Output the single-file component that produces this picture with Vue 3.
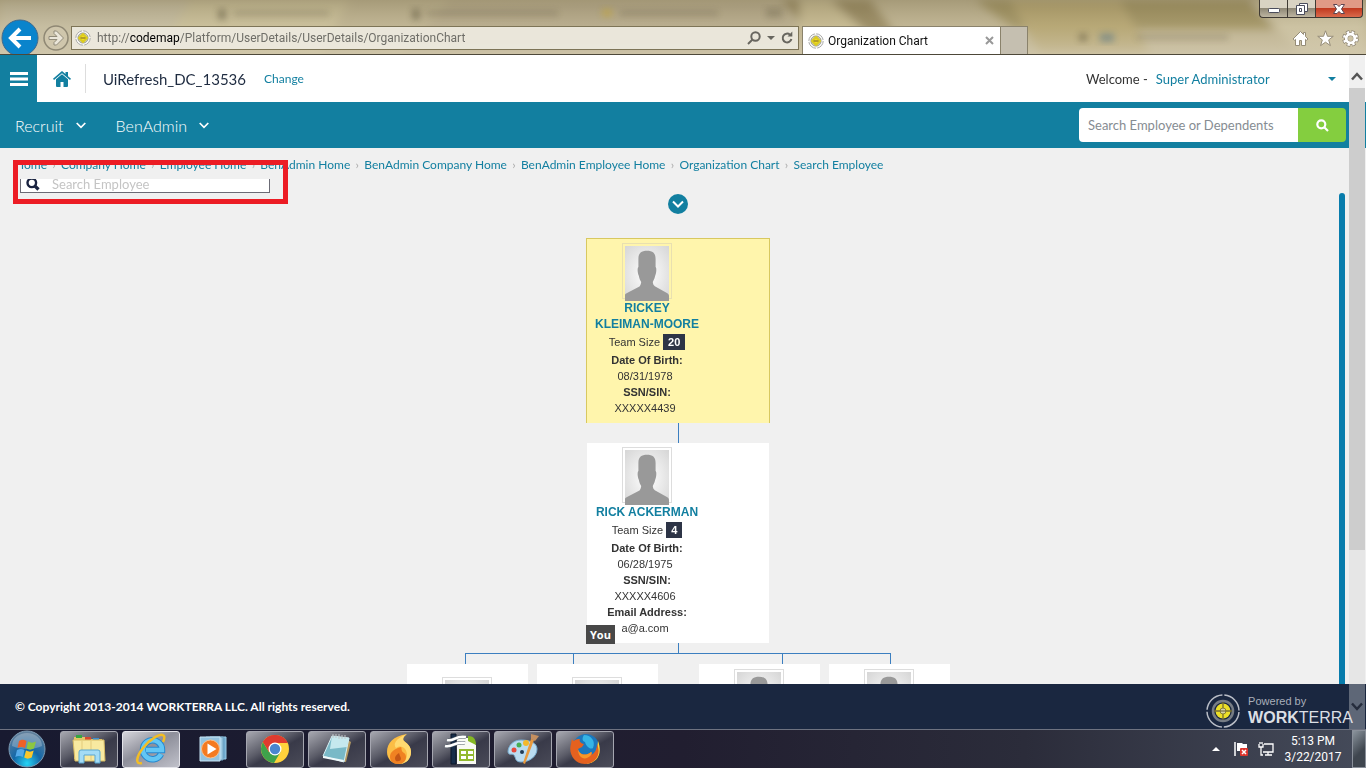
<script setup>
import { ref } from 'vue'

const menus = ['Recruit', 'BenAdmin']

const crumbs = [
  'Home',
  'Company Home',
  'Employee Home',
  'BenAdmin Home',
  'BenAdmin Company Home',
  'BenAdmin Employee Home',
  'Organization Chart',
  'Search Employee'
]

const people = [
  {
    id: 1,
    name: 'RICKEY\nKLEIMAN-MOORE',
    team: 20,
    manager: true,
    fields: [
      ['Date Of Birth:', '08/31/1978'],
      ['SSN/SIN:', 'XXXXX4439']
    ]
  },
  {
    id: 2,
    name: 'RICK ACKERMAN',
    team: 4,
    you: true,
    fields: [
      ['Date Of Birth:', '06/28/1975'],
      ['SSN/SIN:', 'XXXXX4606'],
      ['Email Address:', 'a@a.com']
    ]
  }
]

// direct reports, two per pair
const reports = [
  { id: 'left', low: true, members: [1, 2] },
  { id: 'right', low: false, members: [3, 4] }
]

const employee = ref('')
const search = ref('')
</script>

<template>
  <div class="desktop">
    <svg class="defs" width="0" height="0" aria-hidden="true">
      <defs>
        <radialGradient id="photo-bg" cx=".5" cy=".5" r=".7">
          <stop offset="0" stop-color="#fff" />
          <stop offset="1" stop-color="#d6d6d6" />
        </radialGradient>
        <symbol id="person" viewBox="0 0 44 55">
          <rect width="44" height="55" fill="url(#photo-bg)" />
          <path fill="#999" d="M22 4.700c5.500 0 8.600 2.300 8.600 8V21c1.200.5.900 6-.5 9-.6 3-1.600 4.500-2.300 6 .2 2 .6 3 2 4.200L41 46.500c2 1 3 2 3 3.500v5H0v-6c0-1 1-1.500 3-2.500l11.500-6c1-1.500 1.500-2.500 1.700-4.500-1-1.500-1.800-3-2.300-6-1.400-3-1.700-8.500-.5-9v-8.300c0-5.700 3.100-8 8.600-8z" />
        </symbol>
        <symbol id="favicon" viewBox="0 0 16 16">
          <circle cx="8" cy="8" r="7.200" fill="#f7f7f4" stroke="#a9a9a9" stroke-dasharray="10 1.300" />
          <circle cx="8" cy="8" r="5" fill="#d7d6b8" stroke="#99998f" />
          <path d="M8 4l4 4-4 4-4-4z" fill="#f4df22" stroke="#dccc20" stroke-width="2" stroke-linejoin="round" />
          <path d="M5.500 8h5" stroke="#88752b" stroke-width="1.200" />
        </symbol>
      </defs>
    </svg>

    <header class="chrome">
      <svg class="glass" viewBox="0 0 1366 55" preserveAspectRatio="none" aria-hidden="true">
        <defs>
          <linearGradient id="sheen" x1="0" x2="0" y1="0" y2="1">
            <stop offset="0" stop-color="#8d8260" stop-opacity=".5" />
            <stop offset=".5" stop-color="#c4ba9a" stop-opacity=".4" />
            <stop offset="1" stop-color="#d3cab0" stop-opacity=".75" />
          </linearGradient>
          <filter id="soft"><feGaussianBlur stdDeviation="5" /></filter>
          <filter id="ghost"><feGaussianBlur stdDeviation="3" /></filter>
        </defs>
        <rect width="1366" height="55" fill="#bfb391" />
        <g filter="url(#soft)">
          <path d="M0 0h190l-20 55H0z" fill="#c8c0a6" />
          <path d="M190 0h160l-30 55H160z" fill="#cfc49c" />
          <path d="M450 0h330l30 55H400z" fill="#b3a688" />
          <path d="M780 0h90l40 55h-80z" fill="#857448" />
          <path d="M800 0h30l60 55h-90z" fill="#c9bb8f" />
          <path d="M975 0h300l40 30h-300z" fill="#93834c" />
          <path d="M1010 0h110l30 55h-110z" fill="#b09d60" />
          <path d="M1250 0h116v55h-66z" fill="#d2c8a8" />
        </g>
        <rect width="1366" height="55" fill="url(#sheen)" />
        <g filter="url(#ghost)" fill="#574f38" opacity=".45">
          <rect x="218" y="9" width="8" height="11" />
          <rect x="234" y="11" width="95" height="5" opacity=".55" />
          <rect x="412" y="9" width="8" height="11" />
          <rect x="426" y="11" width="132" height="5" opacity=".55" />
          <rect x="602" y="9" width="10" height="8" fill="#c8a629" />
          <rect x="620" y="11" width="98" height="5" opacity=".55" />
          <rect x="766" y="8" width="16" height="10" opacity=".6" />
          <rect x="1079" y="34" width="8" height="8" />
          <rect x="1100" y="34" width="14" height="9" fill="#4b7087" />
          <rect x="1136" y="36" width="92" height="4" opacity=".65" />
        </g>
      </svg>

      <div class="caption">
        <button class="win-btn" aria-label="Minimize">
          <svg width="14" height="12" viewBox="0 0 14 12"><rect x="1.500" y="5.500" width="11" height="4" rx="1" fill="#fff" stroke="#4b4d5c" /></svg>
        </button>
        <button class="win-btn" aria-label="Restore">
          <svg width="14" height="14" viewBox="0 0 14 14" fill="#fff" stroke="#4b4d5c">
            <path d="M4.500 1.500h8v8h-8z" />
            <path d="M1.500 3.500h8v9h-8zM4.500 6.500h2v3h-2z" fill-rule="evenodd" />
          </svg>
        </button>
        <button class="win-btn win-close" aria-label="Close window">
          <svg width="14" height="12" viewBox="0 0 14 12"><path d="M1.500 1.500h3.500L7 3.600l2-2.100h3.500L9.500 6l3 4.500H9L7 8.400l-2 2.100H1.500l3-4.500z" fill="#fff" stroke="#5d4450" /></svg>
        </button>
      </div>

      <div class="browser-row">
        <div class="travel">
          <button class="back" aria-label="Back">
            <svg width="38" height="38" viewBox="0 0 38 38">
              <circle cx="19" cy="19" r="18" fill="#0a84cc" stroke="#41688a" />
              <path d="M30 19H11M19 10l-9 9 9 9" fill="none" stroke="#fff" stroke-width="4" />
            </svg>
          </button>
          <button class="forward" aria-label="Forward">
            <svg width="26" height="26" viewBox="0 0 26 26">
              <circle cx="13" cy="13" r="12" fill="#cfc6ac" stroke="#8f8874" stroke-width="1.500" />
              <path d="M6 11.500h8L11 8.500V6h2.500l7 7-7 7H11v-2.500l3-3H6z" fill="#ebe6d9" stroke="#918b7a" />
            </svg>
          </button>
        </div>
        <div class="address">
          <svg width="16" height="16"><use href="#favicon" /></svg>
          <div class="url" role="textbox" aria-label="Address" contenteditable="true" spellcheck="false">http://<b>codemap</b>/Platform/UserDetails/UserDetails/OrganizationChart</div>
          <button class="plain" aria-label="Search the web">
            <svg width="14" height="14" viewBox="0 0 14 14" fill="none" stroke="#68665f" stroke-width="2"><circle cx="8.500" cy="5.500" r="4.200" /><path d="M5.500 8.500L1 13" /></svg>
          </button>
          <button class="plain" aria-label="Show address list">
            <svg width="8" height="4" viewBox="0 0 8 4"><path d="M0 0h8L4 4z" fill="#68665f" /></svg>
          </button>
          <button class="plain" aria-label="Refresh">
            <svg width="12" height="14" viewBox="0 0 12 14"><path d="M9 3.700A4.400 4.400 0 1 0 10.400 8" fill="none" stroke="#68665f" stroke-width="2" /><path d="M6.500 5.500h4.800V.5z" fill="#68665f" /></svg>
          </button>
        </div>
        <div class="tab">
          <svg width="16" height="16"><use href="#favicon" /></svg>
          <span>Organization Chart</span>
          <button class="plain" aria-label="Close tab">
            <svg width="9" height="9" viewBox="0 0 9 9"><path d="M1 1l7 7M8 1L1 8" stroke="#999" stroke-width="2" /></svg>
          </button>
        </div>
        <button class="new-tab" aria-label="New tab"></button>
        <div class="browser-tools">
          <button class="plain" aria-label="Home page">
            <svg width="17" height="17" viewBox="0 0 17 17"><path d="M8.500 1.500L1 9l1.500 1.300 1-.9v6.100h4v-5h2v5h4V9.400l1 .9L16 9l-2.500-2.500v-4h-2v2z" fill="#fff" stroke="#958c77" /></svg>
          </button>
          <button class="plain" aria-label="Favorites">
            <svg width="17" height="17" viewBox="0 0 17 17"><path d="M8.500.8l2 5.500h5.800l-4.600 3.600 1.700 5.700-4.900-3.400-4.900 3.400 1.700-5.700L.7 6.300h5.800z" fill="#fff" stroke="#958c77" /></svg>
          </button>
          <button class="plain" aria-label="Tools">
            <svg width="17" height="17" viewBox="0 0 17 17" fill="none">
              <circle cx="8.500" cy="8.500" r="6.300" stroke="#8b8270" stroke-width="4" stroke-dasharray="3.200 1.750" />
              <circle cx="8.500" cy="8.500" r="4.500" stroke="#8b8270" stroke-width="4" />
              <circle cx="8.500" cy="8.500" r="6.300" stroke="#fff" stroke-width="2.500" stroke-dasharray="2.400 2.550" stroke-dashoffset="-.4" />
              <circle cx="8.500" cy="8.500" r="4.300" stroke="#fff" stroke-width="2.800" />
            </svg>
          </button>
        </div>
      </div>
    </header>

    <div class="page">
      <div class="topbar">
        <button class="burger" aria-label="Menu">
          <svg width="18" height="14" viewBox="0 0 18 14" fill="#fff"><path d="M0 0h18v3H0zM0 5.500h18v3H0zM0 11h18v3H0z" /></svg>
        </button>
        <a href="#" class="home" aria-label="Home">
          <svg width="18" height="16" viewBox="0 0 18 16" fill="#127fa0"><path d="M9 3.300l6 5V15a1 1 0 0 1-1 1h-3.500v-5h-3v5H4a1 1 0 0 1-1-1V8.300z" /><path d="M9 0l3.500 3V1h2.500v4.200l3 2.500-1 1.200L9 2.200 1 8.900 0 7.700z" /></svg>
        </a>
        <span class="company">UiRefresh_DC_13536</span>
        <a href="#" class="change">Change</a>
        <div class="account">
          <span>Welcome -</span>
          <a href="#">Super Administrator</a>
          <button class="plain caret" aria-label="Account menu">
            <svg width="8" height="4" viewBox="0 0 8 4"><path d="M0 0h8L4 4z" fill="#127fa0" /></svg>
          </button>
        </div>
      </div>

      <nav class="navbar">
        <button v-for="menu in menus" :key="menu" class="menu">
          {{ menu }}
          <svg width="10" height="7" viewBox="0 0 10 7" fill="none" stroke="#fff" stroke-width="1.700"><path d="M.7 1L5 5.300 9.300 1" /></svg>
        </button>
        <form class="search" @submit.prevent>
          <input v-model="search" type="text" placeholder="Search Employee or Dependents" aria-label="Search Employee or Dependents">
          <button aria-label="Search">
            <svg width="13" height="13" viewBox="0 0 13 13" fill="none" stroke="#fff" stroke-width="2.200"><circle cx="5.300" cy="5.300" r="4" /><path d="M8 8l4 4" /></svg>
          </button>
        </form>
      </nav>

      <main class="content">
        <div class="crumbs">
          <a v-for="crumb in crumbs" :key="crumb" href="#" class="crumb">{{ crumb }}</a>
        </div>

        <div class="employee-search">
          <label class="employee-box">
            <svg width="14" height="14" viewBox="0 0 14 14" fill="none" stroke="#1a2340"><circle cx="5.800" cy="5.800" r="4.300" stroke-width="2.400" /><path d="M8.800 8.800l3.700 3.700" stroke-width="3.200" /></svg>
            <input v-model="employee" type="text" placeholder="Search Employee" aria-label="Search Employee">
          </label>
        </div>
        <div class="marker"></div>

        <div class="tree">
          <button class="expand" aria-label="Show managers">
            <svg width="12" height="8" viewBox="0 0 12 8" fill="none" stroke="#fff" stroke-width="2"><path d="M1 1.500l5 5 5-5" /></svg>
          </button>

          <template v-for="person in people" :key="person.id">
            <article class="card" :class="{ manager: person.manager }">
              <div class="details">
                <div class="photo"><svg width="44" height="55"><use href="#person" /></svg></div>
                <a href="#" class="name">{{ person.name }}</a>
                <div class="team">Team Size <span class="count">{{ person.team }}</span></div>
                <template v-for="[label, value] in person.fields" :key="label">
                  <div class="label">{{ label }}</div>
                  <div class="value">{{ value }}</div>
                </template>
              </div>
              <span v-if="person.you" class="you">You</span>
            </article>
            <div class="link" :class="{ short: person.you }"></div>
          </template>

          <div class="branches"><i></i><i></i></div>
          <div class="reports">
            <div v-for="pair in reports" :key="pair.id" class="pair">
              <article v-for="n in pair.members" :key="n" class="report" :class="{ low: pair.low }">
                <div class="photo"><svg width="44" height="55"><use href="#person" /></svg></div>
              </article>
            </div>
          </div>
        </div>
        <div class="chart-scroll"></div>
      </main>

      <footer class="footer">
        <span>© Copyright 2013-2014 WORKTERRA LLC. All rights reserved.</span>
        <div class="brand">
          <svg width="34" height="34" viewBox="0 0 34 34" fill="none">
            <circle cx="17" cy="17" r="16" stroke="#b9bdc6" stroke-width="1.500" stroke-dasharray="23.100 2" stroke-dashoffset="-1" />
            <circle cx="17" cy="17" r="10" stroke="#777d85" stroke-width="2.500" />
            <circle cx="17" cy="17" r="7.500" fill="#ecdf28" />
            <path d="M17 8v18M8 17h18" stroke="#776f32" stroke-width="1.300" />
            <circle cx="17" cy="17" r="3" fill="#d7d3a4" stroke="#8a8130" />
            <path d="M14 17h6" stroke="#635b2c" />
          </svg>
          <div>
            <div class="powered">Powered by</div>
            <div class="wordmark"><b>WORK</b>TERRA</div>
          </div>
        </div>
      </footer>

      <div class="scrollbar">
        <div class="scroll-up">
          <svg width="12" height="9" viewBox="0 0 12 9"><path d="M1 7.500l5-5.500 5 5.500" fill="none" stroke="#555" stroke-width="2.500" /></svg>
        </div>
        <div class="thumb"></div>
        <div class="track"></div>
        <div class="scroll-down">
          <svg width="12" height="9" viewBox="0 0 12 9"><path d="M1 1.500L6 7l5-5.500" fill="none" stroke="#252c3c" stroke-width="2.500" /></svg>
        </div>
      </div>
    </div>

    <div class="taskbar">
      <button class="start" aria-label="Start">
        <svg width="38" height="38" viewBox="0 0 38 38">
          <defs>
            <radialGradient id="orb" cx=".5" cy=".9" r=".85">
              <stop offset="0" stop-color="#25d4f5" />
              <stop offset=".45" stop-color="#1468a8" />
              <stop offset="1" stop-color="#5f7f9c" />
            </radialGradient>
          </defs>
          <circle cx="19" cy="19" r="18" fill="url(#orb)" stroke="#7d9bb3" />
          <path d="M4 16a15 13 0 0 1 30 0c-8 4-22 4-30 0z" fill="#fff" opacity=".25" />
          <path d="M11 11c3-2 5-1.500 7.500 0L17 18c-2.500-1.500-5-1.500-7.500 0z" fill="#ee6028" />
          <path d="M20 11.500c3 1.500 5 1.500 8 0l-2 7c-3 1.500-5 1.500-7.500 0z" fill="#8cc641" />
          <path d="M9 20c3-1.500 5-1.500 7.500 0l-1.700 7c-2.500-1.500-5-1.500-7.500 0z" fill="#54a9e8" />
          <path d="M18 20.500c3 1.500 5 1.500 7.700 0l-2 7c-3 1.500-5 1.500-7.500 0z" fill="#fbc72c" />
        </svg>
      </button>
      <button class="task" aria-label="Windows Explorer">
        <svg width="34" height="32" viewBox="0 0 34 32">
          <path d="M2 4h11l2 2h15v20H2z" fill="#e3c567" />
          <path d="M4 2h6v3H4z" fill="#35a641" /><path d="M13 4h6v3h-6z" fill="#d8482f" /><path d="M21 5h6v3h-6z" fill="#3b8ed0" />
          <path d="M1 7h31l1 21H3z" fill="#f8e9a0" stroke="#d6ba63" />
          <path d="M10 8v19M19 8v19" stroke="#e3cb7d" />
          <path d="M7 30V19q0-2 2-2h17q2 0 2 2v11h-5v-8H12v8z" fill="#a4dcf5" stroke="#5aa7d1" />
        </svg>
      </button>
      <button class="task active" aria-label="Internet Explorer">
        <svg width="34" height="34" viewBox="0 0 34 34" fill="none">
          <path d="M27 22a9.500 9.500 0 1 1 1-4H12" stroke="#2689d0" stroke-width="6.500" />
          <path d="M27 22a9.500 9.500 0 1 1 1-4H12" stroke="#63c6f4" stroke-width="4.500" />
          <path d="M8 31C1 33 2 25 9 16S27 0 30 4c1 2 0 4-1 6" stroke="#f2bd25" stroke-width="2.500" />
        </svg>
      </button>
      <button class="task bare" aria-label="Media Player">
        <svg width="30" height="28" viewBox="0 0 30 28">
          <path d="M12 2h16v22H12z" fill="#6fa9cd" stroke="#9acbe6" /><path d="M8 2h17v23H8z" fill="#a0cbe3" stroke="#6fa2c1" /><path d="M2 2h20v24H2z" fill="#94c3df" stroke="#c9e5f4" />
          <circle cx="12.500" cy="14" r="9" fill="#f47a20" stroke="#fac08c" /><path d="M9.500 8.500l9 5.500-9 5.500z" fill="#fff" />
        </svg>
      </button>
      <button class="task" aria-label="Chrome">
        <svg width="30" height="30" viewBox="0 0 30 30">
          <circle cx="15" cy="15" r="14" fill="#ffd23c" />
          <path d="M15 15L2.900 8A14 14 0 0 1 27.100 8H15z" fill="#df3b2f" />
          <path d="M2.900 8A14 14 0 0 0 14 29l6.500-11H9z" fill="#3fa24b" />
          <path d="M2.900 8A14 14 0 0 1 27.700 9H15l-6 9z" fill="#df3b2f" />
          <circle cx="15" cy="15" r="6.500" fill="#fff" /><circle cx="15" cy="15" r="5.200" fill="#4a86cf" />
        </svg>
      </button>
      <button class="task" aria-label="Notepad">
        <svg width="32" height="32" viewBox="0 0 32 32">
          <path d="M25 6l5 3-5 20-4-1z" fill="#b59a62" />
          <path d="M11 3l17 2-5 24L2 23z" fill="#79b9c7" stroke="#d8eff3" />
          <path d="M11 3l17 2-2 9-17 2z" fill="#c5e8ee" />
          <path d="M2 23l21 4-1 2-20-4z" fill="#eef8fa" />
          <path d="M12 1v4M15 1v4M18 1v5M21 2v4M24 2v4" stroke="#c1c6c8" />
        </svg>
      </button>
      <button class="task" aria-label="Burn">
        <svg width="28" height="32" viewBox="0 0 28 32">
          <path d="M22 1C8 3 2 10 2 19c0 7 5 12 12 12s12-5 12-12c0-5-3-8-7-11-2-2 0-5 3-7z" fill="#fbbd45" />
          <path d="M22 1C10 6 8 11 11 15c6-4 11 1 11 7 0 4-3 9-8 9 7 0 12-5 12-12 0-5-3-8-7-11-2-2 0-5 3-7z" fill="#ffda70" />
          <path d="M16 14C9 16 5 19 5 24c0 4 3 7 8 7s8-3 8-7-3-4-4-6 0-3-1-4z" fill="#f08222" />
          <path d="M14 20c-4 3-5 5-3 8 5 1 6-2 4-5z" fill="#c55716" />
        </svg>
      </button>
      <button class="task" aria-label="OpenOffice Calc">
        <svg width="34" height="32" viewBox="0 0 34 32">
          <path d="M7 1h5v30H7z" fill="#172d49" stroke="#0c1729" />
          <path d="M13 5h12l7 7v19H13z" fill="#f8faf2" /><path d="M24 3c7 0 8 5 8 9l-8-4z" fill="#85b822" />
          <path d="M15 16h15v12H15z" fill="#92b92e" />
          <path d="M17 18h5v3h-5zM24 18h5v3h-5zM17 23h5v3h-5zM24 23h5v3h-5z" fill="#fff" />
          <path d="M3 7c7 2 8-5 19-3M1 13c8 2 9-5 20-3" fill="none" stroke="#56606b" stroke-width="3.500" />
          <path d="M3 7c7 2 8-5 19-3M1 13c8 2 9-5 20-3" fill="none" stroke="#fff" stroke-width="2.500" />
        </svg>
      </button>
      <button class="task" aria-label="Paint">
        <svg width="34" height="32" viewBox="0 0 34 32">
          <path d="M15 7C7 7 2 13 2 19c1 4 4 1 6 3 2 3 1 7 7 7 9 0 16-6 16-13 0-6-7-9-16-9z" fill="#badcf1" stroke="#7aaed1" />
          <circle cx="8" cy="17" r="2.500" fill="#e44a3d" /><circle cx="13" cy="12" r="2.500" fill="#46ae55" /><circle cx="20" cy="10" r="3" fill="#f4b82c" /><circle cx="16" cy="19" r="2" fill="#203a55" />
          <path d="M28 7l-9 24-2-1 8-24z" fill="#e99a3e" /><path d="M25 1l8 2-4 5-4-2z" fill="#c58f60" />
        </svg>
      </button>
      <button class="task" aria-label="Firefox">
        <svg width="32" height="32" viewBox="0 0 32 32">
          <circle cx="17" cy="14" r="13" fill="#1c77bd" />
          <path d="M15 2c7 0 12 6 9 13-3 2-7-2-8-6-3-1-3-4-1-7z" fill="#36b4e5" />
          <path d="M29 8c5 13-1 22-12 23 7-4 11-10 12-23z" fill="#ffd43b" />
          <path d="M3 5c0 2 1 3 2 3 2-2 4-2 6-2-1 2 0 4 4 5l-2 3-4 2c1 5 7 8 13 3 1 0 1 2 0 3 4-2 6-6 6-11 5 11-2 20-12 20C5 31-1 20 2 11z" fill="#e4611f" />
          <path d="M9 16c1 5 7 8 13 3 1 0 1 2 0 3-5 6-13 4-13-6z" fill="#f79728" />
        </svg>
      </button>

      <div class="tray">
        <button class="plain" aria-label="Show hidden icons"><svg width="8" height="4" viewBox="0 0 8 4"><path d="M0 4h8L4 0z" fill="#fff" /></svg></button>
        <svg width="16" height="16" viewBox="0 0 16 16"><path d="M2 1v14" stroke="#fff" stroke-width="1.500" /><path d="M4 2h5l1 1h4v7H4z" fill="#fff" /><rect x="7" y="7" width="8" height="8" rx="1" fill="#dc352d" /><path d="M9 9l4 4M13 9l-4 4" stroke="#fff" stroke-width="1.500" /></svg>
        <svg width="16" height="16" viewBox="0 0 16 16" fill="none" stroke="#fff" stroke-width="1.300"><path d="M6 3h9v8H5M7 14h7M10 11v3M1 3v3h4V3M2 3V1M4 3V1M3 6v8h2" /></svg>
        <div class="clock">
          <div>5:13 PM</div>
          <div>3/22/2017</div>
        </div>
        <button class="peek" aria-label="Show desktop"></button>
      </div>
    </div>
  </div>
</template>

<style>
body {
  margin: 0;
  overflow: hidden;
}
</style>

<style scoped>
.desktop {
  display: flex;
  flex-direction: column;
  height: 100vh;
  font-family: Lato, "Liberation Sans", sans-serif;
  font-size: 12px;
  color: #333;
}

.desktop * {
  box-sizing: border-box;
}

.defs {
  position: absolute;
}

svg {
  display: block;
  flex: none;
}

a {
  color: #127fa0;
  text-decoration: none;
}

button {
  display: flex;
  align-items: center;
  justify-content: center;
  padding: 0;
  border: 0;
  background: none;
  font: inherit;
  color: inherit;
}

input {
  font: inherit;
  border: 0;
  padding: 0;
  outline: 0;
  min-width: 0;
}

/* browser window */
.chrome {
  position: relative;
  flex: none;
  height: 55px;
  overflow: hidden;
  border-bottom: 1px solid #4d4839;
  font-family: Roboto, "Noto Sans", sans-serif;
}

.glass {
  position: absolute;
  width: 100%;
  height: 100%;
}

.caption {
  position: relative;
  display: flex;
  justify-content: flex-end;
  height: 26px;
  padding-right: 3px;
}

.win-btn {
  width: 28px;
  height: 18px;
  border: 1px solid #3f3a33;
  border-top: 0;
  border-right: 0;
  background: linear-gradient(#d9d3c3 45%, #8f8876 50%, #bdb5a1);
}

.win-btn:first-child {
  border-bottom-left-radius: 4px;
}

.win-close {
  width: 48px;
  border-right: 1px solid #3f3a33;
  border-bottom-right-radius: 4px;
  background: linear-gradient(#e09a86 45%, #c13a20 50%, #d9694c);
}

.browser-row {
  position: relative;
  display: flex;
  height: 28px;
}

.travel {
  display: flex;
  align-items: center;
  gap: 4px;
  width: 71px;
  height: 24px;
  padding-left: 1px;
}

.address {
  flex: 1;
  display: flex;
  align-items: center;
  gap: 6px;
  height: 24px;
  margin-right: 3px;
  padding: 0 5px 0 3px;
  border: 1px solid #7d7456;
  background: #edeadfee;
}

.url {
  flex: 1;
  color: #6f6e68;
  outline: 0;
  white-space: nowrap;
}

.url b {
  font-weight: 400;
  color: #000;
}

.tab {
  display: flex;
  align-items: center;
  gap: 4px;
  width: 199px;
  padding: 0 6px 0 5px;
  border: 1px solid #8a826b;
  border-bottom: 0;
  background: #fff;
  color: #111;
}

.tab span {
  flex: 1;
}

.new-tab {
  width: 27px;
  border: 1px solid #8a826b;
  border-width: 1px 1px 0 0;
  background: #c5bfb0;
}

.browser-tools {
  display: flex;
  justify-content: flex-end;
  align-items: center;
  gap: 8px;
  width: 338px;
  height: 24px;
  padding-right: 7px;
}

/* application */
.page {
  position: relative;
  flex: 1;
  min-height: 0;
  display: flex;
  flex-direction: column;
  background: #f0f0f0;
}

.topbar {
  display: flex;
  align-items: center;
  height: 47px;
  background: #fff;
}

.burger {
  width: 37px;
  height: 47px;
  background: #127fa0;
}

.home {
  padding: 7px 14px 6px 16px;
  border-right: 1px solid #ddd;
}

.company {
  margin: 0 18px 0 17px;
  font-size: 15px;
  color: #1e2b40;
}

.account {
  display: flex;
  align-items: center;
  gap: 8px;
  width: 280px;
  margin-left: auto;
  padding-right: 30px;
  font-size: 13px;
}

.caret {
  margin-left: auto;
}

.navbar {
  display: flex;
  align-items: center;
  gap: 30px;
  height: 46px;
  padding: 0 20px 0 15px;
  background: #127fa0;
}

.menu {
  gap: 12px;
  color: #fff;
  font-size: 16px;
  font-weight: 300;
}

.search {
  display: flex;
  width: 267px;
  height: 34px;
  margin-left: auto;
  border-radius: 4px;
  overflow: hidden;
  font-size: 13px;
}

.search input {
  flex: 1;
  padding: 0 9px;
  background: #fff;
}

.search input::placeholder {
  color: #868c92;
}

.search button {
  width: 48px;
  background: #84ce3f;
}

.content {
  position: relative;
  flex: 1;
  min-height: 0;
  overflow: hidden;
}

.crumbs {
  display: flex;
  height: 31px;
  padding: 9px 15px 0;
  line-height: 16px;
  white-space: nowrap;
}

.crumb + .crumb::before {
  content: "›";
  display: inline-block;
  width: 14px;
  text-align: center;
  color: #aaa;
}

/* the content pane cuts off the upper part of this field */
.employee-search {
  display: flex;
  align-items: flex-end;
  width: 250px;
  height: 14px;
  margin-left: 20px;
  overflow: hidden;
}

.employee-box {
  flex: 1;
  display: flex;
  align-items: center;
  gap: 12px;
  height: 22px;
  padding: 3px 5px 0;
  border: 1px solid #6b6b75;
  background: #fff;
  font-size: 13px;
}

.employee-box input {
  flex: 1;
}

.employee-box input::placeholder {
  color: #c4c4c4;
}

.marker {
  position: absolute;
  top: 12px;
  left: 13px;
  width: 275px;
  height: 44px;
  border: 5px solid #ec1c24;
}

.tree {
  display: flex;
  flex-direction: column;
  align-items: center;
  padding-right: 10px;
  font-family: "Liberation Sans", Arial, sans-serif;
  font-size: 11px;
  line-height: 16px;
}

.expand {
  width: 20px;
  height: 20px;
  margin: 1px 0 24px;
  border-radius: 50%;
  background: #127fa0;
}

.card {
  position: relative;
  width: 184px;
  padding: 4px 0 7px;
  border: solid #f0f0f0;
  border-width: 0 1px;
  background: #fff;
}

.card.manager {
  border-color: #d8c860;
  border-top-width: 1px;
  background: #fff5ac;
}

.details {
  width: 120px;
  text-align: center;
}

.photo {
  width: 50px;
  height: 56px;
  margin: 0 auto 1px;
  padding: 2px;
  border: 1px solid #ddd;
}

.manager .photo {
  border-color: #e9e0b0;
}

.name {
  display: block;
  font-size: 12px;
  font-weight: 700;
  white-space: pre-line;
}

.team {
  line-height: 20px;
}

.count {
  display: inline-block;
  padding: 0 5px;
  background: #2d3446;
  color: #fff;
  font-weight: 700;
  line-height: 16px;
}

.label {
  font-weight: 700;
}

.value {
  padding-right: 4px;
}

.you {
  position: absolute;
  left: -1px;
  bottom: -1px;
  padding: 0 4px;
  background: #484848;
  color: #fff;
  font-family: "Open Sans", sans-serif;
  font-weight: 700;
  line-height: 19px;
}

.link {
  width: 1px;
  height: 20px;
  background: #3c7fc0;
}

.link.short {
  height: 10px;
}

.branches {
  display: flex;
  justify-content: space-between;
  width: 426px;
  height: 11px;
  padding: 0 107px;
  border: 1px solid #3c7fc0;
  border-bottom: 0;
}

.branches i {
  width: 1px;
  background: #3c7fc0;
}

.reports {
  display: flex;
  gap: 41px;
}

.pair {
  display: flex;
  gap: 9px;
}

.report {
  width: 121px;
  height: 200px;
  padding-top: 5px;
  background: #fff;
}

.report.low {
  padding-top: 13px;
}

.chart-scroll {
  position: absolute;
  top: 45px;
  right: 21px;
  bottom: 0;
  width: 6px;
  border-radius: 3px 3px 0 0;
  background: #087cac;
}

.footer {
  display: flex;
  align-items: center;
  justify-content: space-between;
  height: 45px;
  padding: 0 13px 0 15px;
  background: #1a2740;
  color: #fff;
  font-weight: 700;
}

.brand {
  display: flex;
  align-items: center;
  gap: 8px;
  padding-top: 8px;
  color: #dcdfe4;
  font-family: "Liberation Sans", Arial, sans-serif;
  font-weight: 400;
}

.powered {
  font-size: 11px;
  line-height: 14px;
  color: #a9afba;
}

.wordmark {
  font-size: 16px;
  line-height: 20px;
}

.scrollbar {
  position: absolute;
  top: 0;
  right: 1px;
  bottom: 0;
  width: 16px;
  display: flex;
  flex-direction: column;
}

.scroll-up,
.scroll-down {
  display: flex;
  align-items: center;
  justify-content: center;
  height: 33px;
  padding-top: 10px;
  background: #f0f0f0;
}

.thumb {
  flex: 462;
  background: #cdcdcd;
}

.track {
  flex: 134;
  background: #e6e6e6;
}

.scroll-down {
  height: 45px;
  padding-top: 0;
  background: #e6e6e655;
}

/* taskbar */
.taskbar {
  flex: none;
  display: flex;
  align-items: center;
  gap: 4px;
  height: 39px;
  padding-left: 8px;
  border-top: 1px solid #6e7280;
  background: linear-gradient(90deg, #181a30, #211e30 50%, #2b2c3a 75%, #454b5a);
  color: #fff;
}

.start {
  width: 38px;
  margin-right: 10px;
}

.task {
  width: 58px;
  height: 37px;
  border: 1px solid #a5a6b0;
  border-radius: 3px;
  background: linear-gradient(150deg, #a7a8b0, #5c5d69 40%, #393a49 55%, #4a4b58);
}

.task.active {
  border-color: #e4e4ea;
  background: linear-gradient(150deg, #d6d6dc, #8e8f9a 45%, #9b9ca7 60%, #c0c1ca);
}

.task.bare {
  border-color: transparent;
  background: none;
}

.tray {
  display: flex;
  align-items: center;
  gap: 9px;
  height: 100%;
  margin-left: auto;
  font-family: Roboto, "Noto Sans", sans-serif;
}

.tray .plain {
  margin-right: 4px;
}

.clock {
  width: 60px;
  text-align: center;
  line-height: 16px;
}

.peek {
  width: 14px;
  height: 38px;
  border: 1px solid #8a909a;
  background: linear-gradient(135deg, #8b949d, #3f464f 60%);
}
</style>
